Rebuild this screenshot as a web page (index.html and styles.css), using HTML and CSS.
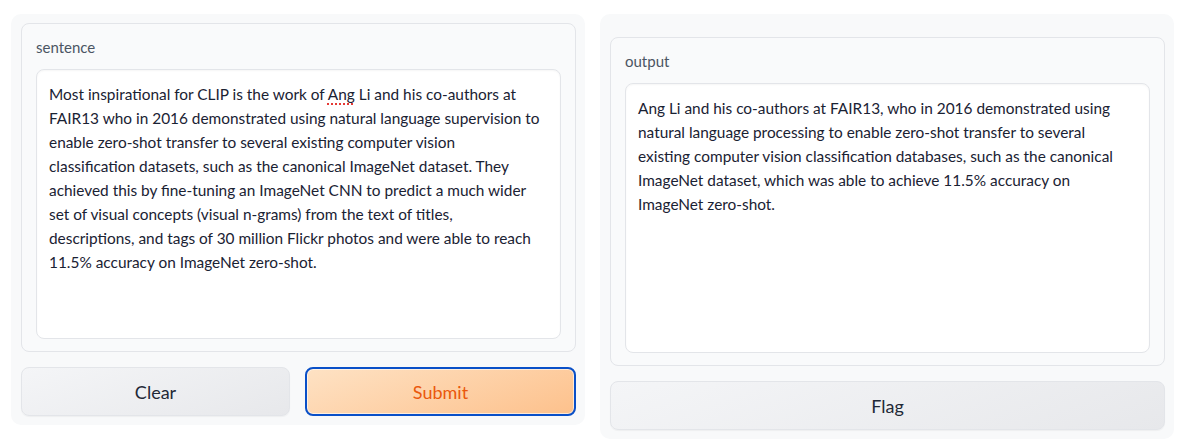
FILE: index.html
```html
<!DOCTYPE html>
<html>
<head>
<meta charset="utf-8">
<link rel="stylesheet" href="styles.css">
</head>
<body>
<div class="app">
  <div class="panel panel-left">
    <div class="block">
      <div class="label">sentence</div>
      <div class="box box-input">Most inspirational for CLIP is the work of <span class="spell">Ang</span> Li and his co-authors at<br>FAIR13 who in 2016 demonstrated using natural language supervision to<br>enable zero-shot transfer to several existing computer vision<br>classification datasets, such as the canonical ImageNet dataset. They<br>achieved this by fine-tuning an ImageNet CNN to predict a much wider<br>set of visual concepts (visual n-grams) from the text of titles,<br>descriptions, and tags of 30 million Flickr photos and were able to reach<br>11.5% accuracy on ImageNet zero-shot.</div>
    </div>
    <div class="buttons">
      <button class="btn btn-secondary">Clear</button>
      <button class="btn btn-primary">Submit</button>
    </div>
  </div>
  <div class="panel panel-right">
    <div class="block">
      <div class="label">output</div>
      <div class="box box-output">Ang Li and his co-authors at FAIR13, who in 2016 demonstrated using<br>natural language processing to enable zero-shot transfer to several<br>existing computer vision classification databases, such as the canonical<br>ImageNet dataset, which was able to achieve 11.5% accuracy on<br>ImageNet zero-shot.</div>
    </div>
    <div class="buttons">
      <button class="btn btn-secondary">Flag</button>
    </div>
  </div>
</div>
</body>
</html>
```
FILE: styles.css
```css
* { box-sizing: border-box; }
html, body { margin: 0; padding: 0; background: #ffffff; }
body {
  font-family: "Lato", "Open Sans", sans-serif;
  color: #1f2937;
  width: 1200px;
  height: 445px;
  overflow: hidden;
}
.app {
  display: flex;
  gap: 15px;
  padding: 14px 26px 0 11px;
  align-items: flex-start;
}
.panel {
  flex: 1 1 0;
  min-width: 0;
  background: #f8f9fa;
  border-radius: 10px;
  padding: 9px 9px 9px 10px;
  display: flex;
  flex-direction: column;
  gap: 15px;
}
.panel-right { padding-top: 23px; }
.block {
  background: #f9fafb;
  border: 1px solid #e3e5e9;
  border-radius: 8px;
  padding: 13px 14px 12px 14px;
}
.label {
  font-size: 15px;
  color: #4b5563;
  line-height: 20px;
  height: 20px;
  margin-bottom: 12px;
}
.box {
  background: #ffffff;
  border: 1px solid #e3e5e9;
  border-radius: 8px;
  box-shadow: inset 0 1px 2px rgba(0,0,0,0.04);
  padding: 12px 12px;
  font-size: 15.4px;
  line-height: 24px;
  white-space: nowrap;
  overflow: hidden;
  color: #1a2233;
}
.box-input { height: 270px; }
.box-output { height: 270px; }
.spell {
  text-decoration: underline dotted #e53935;
  text-decoration-thickness: 2px;
  text-underline-offset: 3px;
}
.buttons {
  display: flex;
  gap: 15px;
}
.btn {
  flex: 1 1 0;
  min-width: 0;
  height: 49px;
  border-radius: 8px;
  font-family: inherit;
  font-size: 18px;
  cursor: pointer;
}
.btn-secondary {
  background: linear-gradient(160deg, #f4f5f7, #e7e8eb);
  border: 1px solid #e3e5e9;
  color: #1f2937;
  box-shadow: 0 1px 1px rgba(0,0,0,0.04);
}
.btn-primary {
  background: linear-gradient(160deg, #fee2c4, #fdc18c);
  border: 2px solid #0a50c8;
  box-shadow: inset 0 0 0 1px rgba(255,255,255,0.6);
  color: #ea580c;
}
```
